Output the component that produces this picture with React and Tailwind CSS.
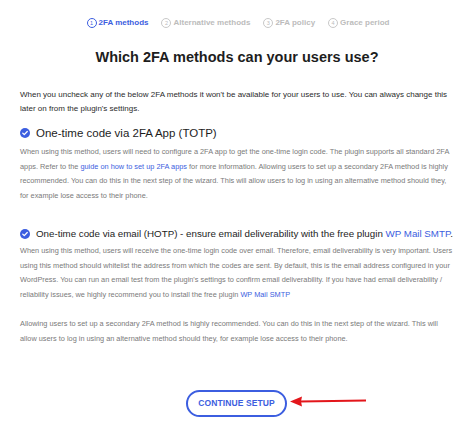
import React from "react";

const steps = [
  { n: 1, label: "2FA methods", active: true },
  { n: 2, label: "Alternative methods" },
  { n: 3, label: "2FA policy" },
  { n: 4, label: "Grace period" },
];

const CheckIcon = () => (
  <svg width="10" height="10" viewBox="0 0 20 20" className="shrink-0">
    <circle cx="10" cy="10" r="10" fill="#3c5ee0" />
    <path
      d="M5.5 10.3l3 3 6-6.2"
      fill="none"
      stroke="#fff"
      strokeWidth="2.6"
      strokeLinecap="round"
      strokeLinejoin="round"
    />
  </svg>
);

const App = () => {
  return (
    <div
      className="w-[474px] h-[446px] bg-white overflow-hidden"
      style={{ fontFamily: '"Liberation Sans", Arial, sans-serif' }}
    >
      {/* wizard steps */}
      <div className="flex justify-center gap-[13px] pt-[18px] pl-[2px]">
        {steps.map((s) => (
          <div
            key={s.n}
            className={`flex items-center gap-[2px] text-[8px] font-bold leading-[10px] ${
              s.active ? "text-[#3c5ee0]" : "text-[#bcbcbc]"
            }`}
          >
            <span
              className={`flex items-center justify-center w-[10px] h-[10px] rounded-full border text-[5.5px] font-normal ${
                s.active ? "border-[#3c5ee0]" : "border-[#c8c8c8]"
              }`}
            >
              {s.n}
            </span>
            {s.label}
          </div>
        ))}
      </div>

      <h1 className="mt-[20px] text-center text-[14.5px] font-bold leading-[18px] text-[#1d1d1d]">
        Which 2FA methods can your users use?
      </h1>

      <div className="px-[20px]">
        <p className="mt-[22px] text-[8px] leading-[14px] text-[#2b2b2b]">
          When you uncheck any of the below 2FA methods it won't be available
          for your users to use. You can always change this later on from the
          plugin's settings.
        </p>

        <div className="mt-[10px] flex items-center gap-[6px] text-[11.5px] leading-[14px] text-[#1d1d1d]">
          <CheckIcon />
          <span>One-time code via 2FA App (TOTP)</span>
        </div>
        <p className="mt-[5px] text-[7.35px] leading-[14.5px] text-[#7a7a7a]">
          When using this method, users will need to configure a 2FA app to get
          the one-time login code. The plugin supports all standard 2FA apps.
          Refer to the{" "}
          <span className="text-[#3c5ee0]">guide on how to set up 2FA apps</span>{" "}
          for more information. Allowing users to set up a secondary 2FA method
          is highly recommended. You can do this in the next step of the
          wizard. This will allow users to log in using an alternative method
          should they, for example lose access to their phone.
        </p>

        <div className="mt-[24px] flex items-center gap-[6px] text-[9.75px] leading-[14px] text-[#1d1d1d]">
          <CheckIcon />
          <span>
            One-time code via email (HOTP) - ensure email deliverability with
            the free plugin{" "}
            <span className="text-[#3c5ee0]">WP Mail SMTP</span>.
          </span>
        </div>
        <p className="mt-[3px] text-[7.35px] leading-[14.5px] text-[#7a7a7a]">
          When using this method, users will receive the one-time login code
          over email. Therefore, email deliverability is very important. Users
          using this method should whitelist the address from which the codes
          are sent. By default, this is the email address configured in your
          WordPress. You can run an email test from the plugin's settings to
          confirm email deliverability. If you have had email deliverability /
          reliability issues, we highly recommend you to install the free
          plugin <span className="text-[#3c5ee0]">WP Mail SMTP</span>
        </p>

        <p className="mt-[15px] text-[7.35px] leading-[14.5px] text-[#7a7a7a]">
          Allowing users to set up a secondary 2FA method is highly
          recommended. You can do this in the next step of the wizard. This
          will allow users to log in using an alternative method should they,
          for example lose access to their phone.
        </p>
      </div>

      {/* continue button + annotation arrow */}
      <div className="mt-[43px] flex justify-center pr-[1px]">
        <div className="relative">
          <button className="w-[101px] h-[27px] rounded-full border-2 border-[#3c5ee0] text-[#3c5ee0] text-[8.5px] font-bold tracking-[0.1px]">
            CONTINUE SETUP
          </button>
          <svg
            width="78"
            height="12"
            viewBox="0 0 78 12"
            className="absolute left-full top-[7px] ml-[3px]"
          >
            <line x1="10" y1="5.5" x2="76" y2="4.5" stroke="#e3161b" strokeWidth="2" />
            <path d="M0 5.5 L12 0.5 L11 5.5 L12 10.5 Z" fill="#e3161b" />
          </svg>
        </div>
      </div>
    </div>
  );
};

export default App;
